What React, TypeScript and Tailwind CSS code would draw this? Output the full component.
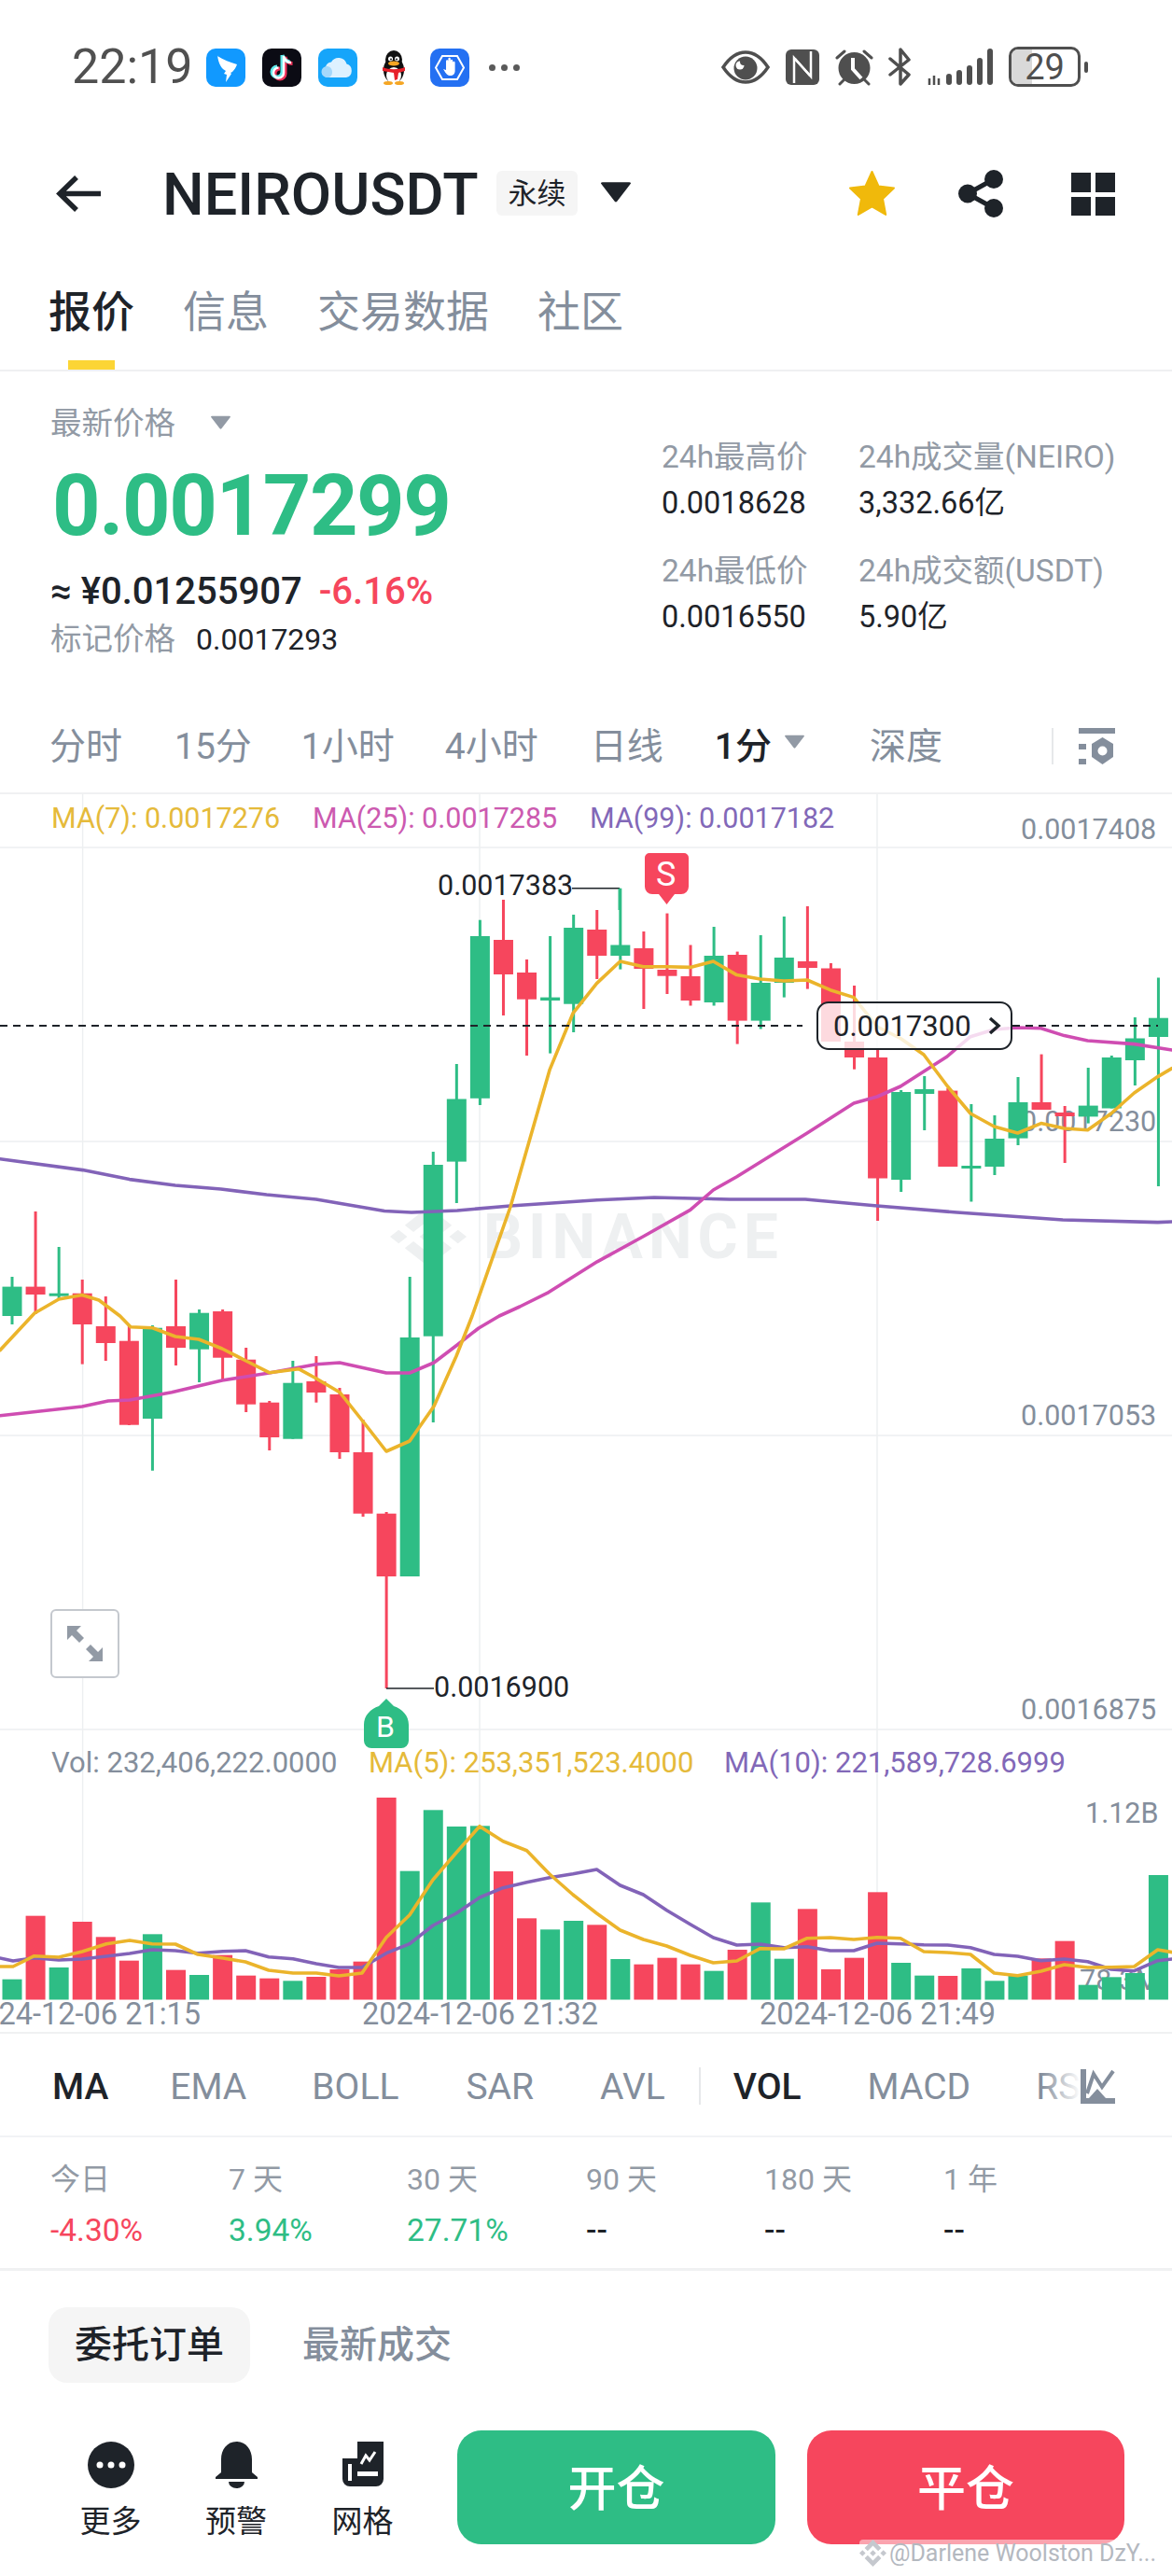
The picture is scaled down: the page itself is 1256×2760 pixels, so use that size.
import React from 'react';

const GREEN = '#2EBD85';
const RED = '#F6465D';
const DARK = '#1E2329';
const cx = (i: number) => 13 + 25.07 * i;

type Candle = [string, number, number, number, number];
const candles: Candle[] = [
  ['g', 1368, 1378.6, 1410, 1419], ['r', 1298, 1378.6, 1387, 1408], ['g', 1336, 1385.7, 1388.6, 1392],
  ['r', 1371, 1385.7, 1419, 1461.6], ['r', 1389, 1421, 1439, 1458], ['r', 1420, 1436.7, 1526.7, 1527],
  ['g', 1420, 1422.7, 1520, 1575.7], ['r', 1371, 1421, 1444, 1463], ['g', 1403, 1406.7, 1445.7, 1481],
  ['r', 1403, 1405, 1454.7, 1478], ['r', 1444, 1456.7, 1504.7, 1513], ['r', 1501, 1502.7, 1540, 1554],
  ['g', 1458, 1481.7, 1541.7, 1541.7], ['r', 1453, 1480, 1492, 1502.7], ['r', 1487, 1494, 1556, 1563],
  ['r', 1521, 1556, 1621.7, 1625], ['r', 1620, 1621.7, 1689, 1809], ['g', 1368, 1433, 1689, 1689],
  ['g', 1234, 1248, 1431.7, 1524], ['g', 1140, 1177.5, 1244.6, 1289], ['g', 985.7, 1003, 1176.8, 1184],
  ['r', 964, 1007, 1044, 1088], ['r', 1028, 1042, 1070.7, 1131], ['g', 1003, 1068.6, 1072, 1128.6],
  ['g', 980, 994, 1075.7, 1106], ['r', 975, 996, 1024, 1049], ['g', 951.8, 1012.5, 1024, 1038.6],
  ['r', 998, 1016, 1038, 1081], ['r', 978.6, 1039, 1045.7, 1065], ['r', 1012.5, 1046, 1072, 1077.5],
  ['g', 993, 1024, 1074, 1077.5], ['r', 1019.6, 1023, 1093.6, 1118.6], ['g', 1002, 1053, 1093.6, 1102.5],
  ['g', 982, 1026, 1053, 1068.6], ['r', 971, 1030, 1037, 1059.6], ['r', 1032, 1037.5, 1116, 1116],
  ['r', 1056, 1116, 1133, 1145.7], ['r', 1125, 1133, 1262.5, 1308], ['g', 1168, 1170, 1264, 1277],
  ['g', 1153, 1167, 1172, 1211], ['r', 1166, 1168.6, 1250, 1250], ['g', 1183, 1249, 1252, 1287.5],
  ['g', 1195, 1220, 1250, 1259], ['g', 1154, 1181, 1219.6, 1227], ['r', 1129.6, 1181, 1189, 1189],
  ['r', 1185, 1192, 1196, 1246], ['g', 1144, 1184.6, 1196.4, 1203.6], ['g', 1131, 1133, 1187.5, 1187.5],
  ['g', 1090, 1112.5, 1136, 1163], ['g', 1047.5, 1090.7, 1111, 1271], ['g', 1060, 1085, 1110, 1200],
];

const vols: [string, number][] = [
  ['g', 782], ['r', 578], ['g', 744], ['r', 597], ['r', 646], ['r', 722], ['g', 637], ['r', 752], ['g', 768], ['r', 704],
  ['r', 770], ['r', 779], ['g', 787], ['r', 774], ['r', 750], ['r', 725], ['r', 198], ['g', 434], ['g', 238], ['g', 291],
  ['g', 289], ['r', 435], ['r', 586], ['g', 622], ['g', 594], ['r', 607], ['g', 717], ['r', 734], ['r', 713], ['r', 734],
  ['g', 755], ['r', 687], ['g', 535], ['g', 716], ['r', 556], ['r', 750], ['r', 713], ['r', 502], ['g', 729], ['g', 770],
  ['r', 771], ['g', 747], ['g', 787], ['g', 770], ['r', 715], ['r', 659], ['g', 800], ['g', 775], ['g', 762], ['g', 447],
];

const ma7 = '0,1446.7 37,1407 63,1392 88,1387.5 106,1393 128.6,1410 140,1421.7 163.5,1422.7 188,1432 213,1435 238,1445 263.6,1458 288.5,1470.7 320,1466.7 339,1477 364,1491.7 389,1523 414,1555 439,1544 465,1506.7 489,1453 506,1410 547,1293 589,1146.4 614,1085.7 639.5,1053.6 664.6,1030 689.4,1035.7 714.5,1035.7 739.7,1036.4 764.4,1030 789.6,1044.6 814.7,1049 840,1051 865,1050 889.8,1060.7 915,1068.6 940,1100 965,1112.5 990,1130 1015.5,1164 1040,1193 1065.4,1207 1090.6,1214 1115.7,1203.6 1140.5,1209 1165.6,1210.7 1190.8,1193 1215.5,1171 1240.7,1153.6 1256,1144.6';
const ma25 = '0,1516.7 88,1507 116,1501 139,1500 184,1491.7 238,1479 288.5,1471 339,1461.7 364,1460 414,1471 439,1471 465,1460 489,1441.7 513,1423 535,1410 557,1400 588,1384.6 640,1351.8 689,1325 739.7,1296.4 764.4,1275 789.6,1260.7 865,1214 915,1182 940,1175 965,1164 1015,1132 1040,1110.7 1065.4,1103 1090.6,1101 1115.7,1101.8 1140.5,1109.6 1165.6,1115 1215.5,1118.6 1256,1125';
const ma99 = '0,1241.8 88.6,1253.6 138.8,1263.6 187.8,1270 236.7,1274 285.7,1280 338.8,1285 412,1297.5 441,1299 490,1297 547,1292 640,1285.7 701,1283 782,1285 863,1285 940,1292 1025.7,1299 1139,1307 1240.7,1309.6 1256,1309';
const v5 = '0,2107 14,2107 36.7,2095.7 63,2097 88,2091 114,2082.7 139,2079 163,2082.7 188,2083 212,2094 239,2098 263,2102 288,2111 314,2114 339,2114 363,2117 388,2114 414,2075.7 439,2051.7 464,2014 489,1985 514,1956.7 539,1972.7 564.5,1982.7 589,2008 614,2030 639.5,2050 664.6,2068 689.4,2078 714.5,2085 739.7,2095 764.4,2103 789.6,2101 814.7,2087.7 840,2088 865,2076.7 889.8,2076 915,2078 940,2075.7 965,2076.7 990,2091 1015.5,2092 1040,2094 1065.4,2114 1090.6,2116.7 1115.7,2112 1140.5,2105 1165.6,2108 1190.8,2107.7 1215.5,2107 1240.7,2089 1256,2091.7';
const v10 = '0,2098 14,2101 36.7,2097.7 63,2100 88,2099 114,2096 139,2093 163,2089 188,2090 212,2092.7 239,2090.7 263,2090 288,2096.7 314,2098.7 339,2104 363,2108 388,2108 414,2092.7 439,2082.7 464,2063 489,2050 514,2033 539,2022.7 564.5,2016.7 589,2011.7 614,2007.7 639.5,2003 664.6,2020 689.4,2030 714.5,2046.7 739.7,2061.7 764.4,2076 789.6,2084 814.7,2083 840,2086.7 865,2085.7 889.8,2090 915,2090 940,2082 965,2082.7 990,2083.7 1015.5,2084 1040,2086.7 1065.4,2094 1090.6,2096 1115.7,2100.7 1140.5,2099 1165.6,2101.7 1190.8,2110 1215.5,2111.7 1240.7,2100.7 1256,2099';

const BN = 'M38.73 53.2l24.59-24.58 24.6 24.6 14.3-14.31L63.32 0 24.42 38.9zM0 63.31l14.3-14.31 14.31 14.31-14.31 14.3zM38.73 73.41l24.59 24.59 24.6-24.6 14.31 14.29-38.9 38.91-38.91-38.88zM98 63.31l14.3-14.3 14.31 14.3-14.31 14.3zM77.83 63.3L63.32 48.78 52.59 59.51l-1.24 1.23-2.54 2.54 14.51 14.5 14.51-14.47z';

function Line({ pts, color, w = 3.6 }: { pts: string; color: string; w?: number }) {
  return <polyline points={pts} fill="none" stroke={color} strokeWidth={w} strokeLinejoin="round" strokeLinecap="round" />;
}

function ChartSvg() {
  return (
    <svg className="absolute left-0 top-0" width={1256} height={1326} viewBox="0 851 1256 1326">
      {candles.map((c, i) => {
        const col = c[0] === 'g' ? GREEN : RED;
        return (
          <g key={i}>
            <rect x={cx(i) - 1.5} y={c[1]} width={3} height={c[4] - c[1]} fill={col} />
            <rect x={cx(i) - 10.5} y={c[2]} width={21} height={Math.max(c[3] - c[2], 3)} fill={col} />
          </g>
        );
      })}
      <Line pts={ma99} color="#8263B8" />
      <Line pts={ma25} color="#CF4DB2" />
      <Line pts={ma7} color="#EBB42B" />
      <line x1={0} y1={1099} x2={860} y2={1099} stroke={DARK} strokeWidth={2} strokeDasharray="8 6" />
      <line x1={1085} y1={1099} x2={1241} y2={1099} stroke={DARK} strokeWidth={2} strokeDasharray="8 6" />
      <polyline points="613,951.8 664,951.8" fill="none" stroke={DARK} strokeWidth={1.5} />
      <line x1={664} y1={951.8} x2={664} y2={975} stroke={GREEN} strokeWidth={3} />
      <polyline points="414,1809 465,1809" fill="none" stroke={DARK} strokeWidth={1.5} />
      {vols.map((v, i) => {
        const top = 1860 + v[1] / 3;
        return <rect key={i} x={cx(i) - 10.5} y={top} width={21} height={2142.5 - top} fill={v[0] === 'g' ? GREEN : RED} />;
      })}
      <Line pts={v10} color="#8263B8" />
      <Line pts={v5} color="#EBB42B" />
      <path d="M697 914h36a5 5 0 0 1 5 5v31a8 8 0 0 1-8 8h-7l-8.500 11-8.500-11h-7a8 8 0 0 1-8-8v-31a5 5 0 0 1 5-5z" fill={RED} />
      <path d="M414 1820l8 8c9 3 16 10 16 20v17a8 8 0 0 1-8 8h-32a8 8 0 0 1-8-8v-17c0-10 7-17 16-20z" fill={GREEN} />
    </svg>
  );
}

function Grid() {
  return (
    <svg className="absolute left-0 top-0" width={1256} height={1326} viewBox="0 851 1256 1326">
      {[88.6, 514, 940].map((x) => (
        <line key={x} x1={x} y1={851} x2={x} y2={2142} stroke="#EDEFF1" strokeWidth={1.5} />
      ))}
      {[908, 1223, 1538, 1853].map((y) => (
        <line key={y} x1={0} y1={y} x2={1256} y2={y} stroke="#EDEFF1" strokeWidth={1.5} />
      ))}
      <svg x={418} y={1293} width={82} height={64} viewBox="0 0 126.61 126.61" preserveAspectRatio="none">
        <path d={BN} fill="#EEF0F1" />
      </svg>
    </svg>
  );
}

function AppIcons() {
  return (
    <div className="flex items-center ml-[13px]">
      <svg width={42} height={41} viewBox="0 0 42 41">
        <rect width={42} height={41} rx={10} fill="#1199FF" />
        <path d="M12 8c6 4 14 7 21 9-1 3-3 6-5 8l-2 1 1 1-6 9 1-8-3-1 2-3c-4-2-8-7-9-17z" fill="#fff" />
      </svg>
      <svg className="ml-[18px]" width={42} height={41} viewBox="0 0 42 41">
        <rect width={42} height={41} rx={10} fill="#0B0B14" />
        <path d="M23 8v18a5.500 5.500 0 1 1-5.500-5.500M23 8c1 4 4 7 8 7" fill="none" stroke="#F0325A" strokeWidth={4} transform="translate(1.500 1)" />
        <path d="M23 8v18a5.500 5.500 0 1 1-5.500-5.500M23 8c1 4 4 7 8 7" fill="none" stroke="#5FE8EA" strokeWidth={4} transform="translate(-1.500 -1)" />
        <path d="M23 8v18a5.500 5.500 0 1 1-5.500-5.500M23 8c1 4 4 7 8 7" fill="none" stroke="#fff" strokeWidth={2.500} />
      </svg>
      <svg className="ml-[18px]" width={42} height={41} viewBox="0 0 42 41">
        <rect width={42} height={41} rx={10} fill="#16A5FA" />
        <path d="M10 31a6 6 0 0 1-2-11.500 7 7 0 0 1 6-5 9 9 0 0 1 16.500 2A7.500 7.500 0 0 1 30 31z" fill="#DDF1FF" />
        <path d="M10 31a6 6 0 0 1-1-12c3 0 6 2 6 6s-2 6-5 6z" fill="#A5D8FB" />
      </svg>
      <svg className="ml-[24px]" width={30} height={37} viewBox="0 0 30 37">
        <ellipse cx={15} cy={21} rx={11} ry={14} fill="#111" />
        <ellipse cx={15} cy={10} rx={9} ry={10} fill="#111" />
        <ellipse cx={15} cy={27} rx={8} ry={9} fill="#fff" />
        <circle cx={11.500} cy={9} r={2.500} fill="#fff" />
        <circle cx={18.500} cy={9} r={2.500} fill="#fff" />
        <circle cx={12} cy={9.500} r={1} fill="#111" />
        <circle cx={18} cy={9.500} r={1} fill="#111" />
        <ellipse cx={15} cy={14} rx={6} ry={2.500} fill="#F5A623" />
        <path d="M3 18c7 3 17 3 24 0v4l-7 2-1 7-3 1-1-8-12-2z" fill="#E7202A" />
        <ellipse cx={9} cy={35} rx={5} ry={2} fill="#F5A623" />
        <ellipse cx={21} cy={35} rx={5} ry={2} fill="#F5A623" />
      </svg>
      <svg className="ml-[24px]" width={42} height={41} viewBox="0 0 42 41">
        <rect width={42} height={41} rx={10} fill="#2470F2" />
        <path d="M13 8h16l7 12.500-7 12.500H13L6 20.500z" fill="none" stroke="#fff" strokeWidth={2} />
        <path d="M14 22l3 1V13.500a1.200 1.200 0 0 1 2.400 0V11a1.200 1.200 0 0 1 2.400 0v2a1.200 1.200 0 0 1 2.400 0v2a1.200 1.200 0 0 1 2.400 0v9c0 3-2 5-5 5-3 0-4-1-7.600-7z" fill="#fff" />
      </svg>
      <div className="flex gap-[6px] ml-[21px]">
        <div className="w-[7px] h-[7px] rounded-full bg-[#5a5a5a]" />
        <div className="w-[7px] h-[7px] rounded-full bg-[#5a5a5a]" />
        <div className="w-[7px] h-[7px] rounded-full bg-[#5a5a5a]" />
      </div>
    </div>
  );
}

function StatusRight() {
  const c = '#4F4F4F';
  return (
    <div className="flex items-center absolute left-[773px] top-[50px]">
      <svg width={52} height={38} viewBox="0 0 52 38">
        <path d="M2 19C10 7 18 3 26 3s16 4 24 16c-8 12-16 16-24 16S10 31 2 19z" fill="none" stroke={c} strokeWidth={3.500} />
        <circle cx={26} cy={20} r={12.500} fill={c} />
        <circle cx={20} cy={17} r={4.500} fill="#fff" />
        <circle cx={24} cy={13} r={4} fill={c} />
      </svg>
      <svg className="ml-[17px]" width={36} height={38} viewBox="0 0 36 38">
        <rect width={36} height={38} rx={6} fill={c} />
        <path d="M9 36V9l17 19" fill="none" stroke="#fff" strokeWidth={2.500} />
        <path d="M27 2v27L10 10" fill="none" stroke="#fff" strokeWidth={2.500} />
      </svg>
      <svg className="ml-[17px]" width={41} height={40} viewBox="0 0 41 40">
        <circle cx={20.500} cy={21} r={17} fill={c} />
        <path d="M19 10v12l9 10" fill="none" stroke="#fff" strokeWidth={4} />
        <path d="M2 10l8-7M39 10l-8-7M5 38l4-4M36 38l-4-4" stroke={c} strokeWidth={3} strokeLinecap="round" />
      </svg>
      <svg className="ml-[16px]" width={25} height={41} viewBox="0 0 25 41">
        <path d="M2 29L22 13 13 2v37l9-10L2 12" fill="none" stroke={c} strokeWidth={3.500} strokeLinejoin="round" strokeLinecap="round" />
      </svg>
      <svg className="ml-[16px]" width={71} height={41} viewBox="0 0 71 41">
        <path d="M3 33v7M8 30v10M13 33v7" stroke={c} strokeWidth={2.500} />
        <rect x={21} y={28} width={6} height={12} rx={3} fill={c} />
        <rect x={32} y={24} width={6} height={16} rx={3} fill={c} />
        <rect x={43} y={19} width={6} height={21} rx={3} fill={c} />
        <rect x={54} y={11} width={6} height={29} rx={3} fill={c} />
        <rect x={65} y={1} width={6} height={39} rx={3} fill={c} />
      </svg>
      <div className="relative ml-[17px] w-[77px] h-[43px] rounded-[10px] border-[3px] border-[#4F4F4F] overflow-hidden flex items-center justify-center">
        <div className="absolute left-0 top-0 bottom-0 w-[22px] bg-[#D9D9D9]" />
        <span className="relative text-[38px] leading-none text-[#4F4F4F]">29</span>
      </div>
      <div className="ml-[4px] w-[4px] h-[12px] rounded-full bg-[#4F4F4F]" />
    </div>
  );
}

const Tri = ({ w, h, color }: { w: number; h: number; color: string }) => (
  <svg width={w} height={h} viewBox="0 0 10 10" preserveAspectRatio="none">
    <path d="M0.500 0.500h9a.5.5 0 0 1 .4.8L5.400 9.500a.5.5 0 0 1-.8 0L.1 1.300a.5.5 0 0 1 .4-.8z" fill={color} />
  </svg>
);

function Abs({ x, y, h, cls, children }: { x: number; y: number; h: number; cls: string; children: React.ReactNode }) {
  return (
    <div className={`absolute whitespace-nowrap ${cls}`} style={{ left: x, top: y - 851, lineHeight: `${h}px` }}>
      {children}
    </div>
  );
}

export default function App() {
  return (
    <div className="relative w-[1256px] h-[2760px] bg-white overflow-hidden flex flex-col font-[Roboto,'Noto_Sans_CJK_SC',sans-serif] text-[#1E2329]">
      {/* status bar */}
      <div className="h-[144px] shrink-0 flex items-center pl-[77px]">
        <span className="text-[52px] leading-none text-[#505050] w-[131px] whitespace-nowrap">22:19</span>
        <AppIcons />
      </div>
      <StatusRight />

      {/* header */}
      <div className="h-[126px] shrink-0 flex items-center relative">
        <svg className="ml-[60px]" width={50} height={39} viewBox="0 0 50 39">
          <path d="M48 19.500H6M22 2L4 19.500 22 37" fill="none" stroke={DARK} strokeWidth={5.500} />
        </svg>
        <span className="ml-[64px] mt-[2px] text-[63px] leading-none font-medium w-[345px] whitespace-nowrap">NEIROUSDT</span>
        <span className="ml-[13px] w-[87px] h-[48px] rounded-[6px] bg-[#F5F5F5] flex items-center justify-center text-[31px] leading-none">永续</span>
        <div className="ml-[25px] mt-[-3px] flex">
          <Tri w={32} h={23} color={DARK} />
        </div>
        <svg className="absolute left-[909px] top-[38px]" width={51} height={51} viewBox="0 0 51 51">
          <path d="M25.500 2l7 15.500 16.500 2-12 11.500 3.200 17-14.700-8.500-14.700 8.500 3.200-17L2 19.500l16.500-2z" fill="#F0B90B" stroke="#F0B90B" strokeWidth={2} strokeLinejoin="round" />
        </svg>
        <svg className="absolute left-[1027px] top-[38px]" width={48} height={51} viewBox="0 0 48 51">
          <path d="M10 25.500L38 10M10 25.500L38 41" stroke={DARK} strokeWidth={5} />
          <circle cx={10} cy={25.500} r={10} fill={DARK} />
          <circle cx={38} cy={10} r={10} fill={DARK} />
          <circle cx={38} cy={41} r={10} fill={DARK} />
        </svg>
        <div className="absolute left-[1148px] top-[41px] w-[47px] h-[46px] grid grid-cols-2 gap-[5px]">
          <div className="bg-[#1E2329]" /><div className="bg-[#1E2329]" /><div className="bg-[#1E2329]" /><div className="bg-[#1E2329]" />
        </div>
      </div>

      {/* tabs */}
      <div className="h-[128px] shrink-0 border-b-2 border-[#EFF0F2] flex pl-[52px] gap-[52px]">
        <div className="flex flex-col items-center">
          <span className="mt-[41px] text-[46px] leading-[46px] font-medium">报价</span>
          <div className="mt-[29px] w-[50px] h-[10px] bg-[#FCD535]" />
        </div>
        <span className="mt-[41px] text-[46px] leading-[46px] text-[#848E9C]">信息</span>
        <span className="mt-[41px] text-[46px] leading-[46px] text-[#848E9C]">交易数据</span>
        <span className="mt-[41px] text-[46px] leading-[46px] text-[#848E9C]">社区</span>
      </div>

      {/* price block */}
      <div className="h-[354px] shrink-0 flex">
        <div className="w-[709px] shrink-0 pl-[54px] flex flex-col">
          <div className="mt-[38px] h-[36px] flex items-center text-[33.500px] leading-[36px] text-[#929AA5]">
            最新价格
            <div className="ml-[38px] mt-[-4px] flex"><Tri w={21} h={15} color="#929AA5" /></div>
          </div>
          <div className="mt-[31px] ml-[2px] h-[80px] text-[90px] leading-[80px] font-bold text-[#2EBD85] tracking-[-1.400px]">0.0017299</div>
          <div className="mt-[31px] h-[40px] flex items-baseline text-[40px] leading-[40px] font-medium">
            <span>≈ ¥0.01255907</span>
            <span className="ml-[18px] text-[#F6465D]">-6.16%</span>
          </div>
          <div className="mt-[13px] h-[36px] flex items-center text-[33.500px] leading-[36px] text-[#929AA5]">
            标记价格
            <span className="ml-[22px] text-[32px] text-[#1E2329]">0.0017293</span>
          </div>
        </div>
        <div className="grid grid-cols-[211px_1fr] content-start pt-[75px]">
          {[
            ['24h最高价', '0.0018628', '24h成交量(NEIRO)', '3,332.66亿'],
            ['24h最低价', '0.0016550', '24h成交额(USDT)', '5.90亿'],
          ].map((r, i) => (
            <React.Fragment key={i}>
              <div className={i ? 'mt-[39px]' : ''}>
                <div className="text-[33.500px] leading-[34px] text-[#929AA5] whitespace-nowrap">{r[0]}</div>
                <div className="mt-[15px] text-[32.500px] leading-[34px]">{r[1]}</div>
              </div>
              <div className={i ? 'mt-[39px]' : ''}>
                <div className="text-[33.500px] leading-[34px] text-[#929AA5] whitespace-nowrap">{r[2]}</div>
                <div className="mt-[15px] text-[32.500px] leading-[34px]">{r[3]}</div>
              </div>
            </React.Fragment>
          ))}
        </div>
      </div>

      {/* intervals */}
      <div className="h-[97px] shrink-0 relative flex items-center pl-[53px] text-[39px] leading-none text-[#848E9C]">
        <span>分时</span>
        <span className="ml-[56px]">15分</span>
        <span className="ml-[53px]">1小时</span>
        <span className="ml-[54px]">4小时</span>
        <span className="ml-[56px]">日线</span>
        <span className="ml-[55px] flex items-center text-[#1E2329] font-medium">
          1分
          <span className="ml-[14px] mt-[-12px] flex"><Tri w={21} h={15} color="#929AA5" /></span>
        </span>
        <span className="ml-[70px]">深度</span>
        <div className="absolute left-[1127px] top-[28px] w-[1.500px] h-[39px] bg-[#E6E8EA]" />
        <svg className="absolute left-[1156px] top-[28px]" width={39} height={39} viewBox="0 0 39 39">
          <rect width={39} height={6} fill="#848E9C" />
          <rect y={17} width={8} height={6} fill="#848E9C" />
          <rect y={33} width={8} height={6} fill="#848E9C" />
          <path d="M25.500 10l11.500 7v14l-11.500 8L14 31V17z" fill="#848E9C" />
          <circle cx={25.500} cy={24.500} r={5} fill="#fff" />
        </svg>
      </div>

      {/* chart */}
      <div className="relative h-[1326px] shrink-0 border-t-2 border-[#F0F1F2] box-content overflow-hidden text-[30.500px]">
        <Grid />
        <Abs x={518} y={1294} h={64} cls="text-[66px] font-bold text-[#EEF0F1] tracking-[6px]">BINANCE</Abs>
        <Abs x={1094} y={871} h={36} cls="text-[#848E9C]">0.0017408</Abs>
        <Abs x={1094} y={1184} h={36} cls="text-[#848E9C]">0.0017230</Abs>
        <Abs x={1094} y={1499} h={36} cls="text-[#848E9C]">0.0017053</Abs>
        <Abs x={1094} y={1814} h={36} cls="text-[#848E9C]">0.0016875</Abs>
        <Abs x={1163} y={1925} h={36} cls="text-[#848E9C]">1.12B</Abs>
        <Abs x={1157} y={2104} h={36} cls="text-[#848E9C]">78.3M</Abs>
        <ChartSvg />
        <Abs x={55} y={859} h={36} cls="text-[#E5BA3A]">MA(7): 0.0017276</Abs>
        <Abs x={335} y={859} h={36} cls="text-[#CC5AB0]">MA(25): 0.0017285</Abs>
        <Abs x={632} y={859} h={36} cls="text-[#8268B8]">MA(99): 0.0017182</Abs>
        <Abs x={469} y={931} h={36} cls="text-[#1E2329]">0.0017383</Abs>
        <Abs x={465} y={1790} h={36} cls="text-[#1E2329]">0.0016900</Abs>
        <Abs x={703} y={917} h={40} cls="text-[36px] text-white">S</Abs>
        <Abs x={403} y={1830} h={40} cls="text-[32px] text-white">B</Abs>
        <Abs x={55} y={1871} h={36} cls="text-[31px] text-[#848E9C]">Vol: 232,406,222.0000</Abs>
        <Abs x={395} y={1871} h={36} cls="text-[31px] text-[#E5BA3A]">MA(5): 253,351,523.4000</Abs>
        <Abs x={776} y={1871} h={36} cls="text-[31px] text-[#8268B8]">MA(10): 221,589,728.6999</Abs>
        <Abs x={-38} y={2140} h={36} cls="text-[32.500px] text-[#848E9C]">2024-12-06 21:15</Abs>
        <Abs x={388} y={2140} h={36} cls="text-[32.500px] text-[#848E9C]">2024-12-06 21:32</Abs>
        <Abs x={814} y={2140} h={36} cls="text-[32.500px] text-[#848E9C]">2024-12-06 21:49</Abs>

        <div className="absolute left-[875px] top-[222px] w-[210px] h-[52px] rounded-[13px] border-2 border-[#1E2329] bg-white/80 flex items-center pl-[16px] text-[31px] leading-none">
          0.0017300
          <svg className="ml-[18px]" width={14} height={20} viewBox="0 0 14 20">
            <path d="M2 2l9 8-9 8" fill="none" stroke={DARK} strokeWidth={3.500} />
          </svg>
        </div>
        <div className="absolute left-[54px] top-[873px] w-[74px] h-[74px] rounded-[6px] border-2 border-[#C4C8CE] bg-white flex items-center justify-center">
          <svg width={44} height={44} viewBox="0 0 44 44">
            <path d="M3 3h15l-5 5 8 8-5 5-8-8-5 5z" fill="#929AA5" />
            <path d="M41 41H26l5-5-8-8 5-5 8 8 5-5z" fill="#929AA5" />
          </svg>
        </div>
      </div>

      <div className="h-[2px] shrink-0 bg-[#F0F1F2]" />

      {/* indicators */}
      <div className="relative h-[111px] shrink-0 border-b-2 border-[#F2F3F5] text-[39px] leading-none text-[#848E9C]">
        <div className="flex items-center h-full pl-[56px] pt-[6px] gap-[70px] whitespace-nowrap">
          <span className="text-[#1E2329] font-medium">MA</span>
          <span className="ml-[-4px]">EMA</span>
          <span>BOLL</span>
          <span className="ml-[2px]">SAR</span>
          <span className="ml-[1px]">AVL</span>
          <span className="ml-[3px] text-[#1E2329] font-medium">VOL</span>
          <span className="ml-[1px]">MACD</span>
          <span>RSI</span>
        </div>
        <div className="absolute left-[749px] top-[36px] w-[1.500px] h-[40px] bg-[#E6E8EA]" />
        <div className="absolute left-[1116px] top-0 bottom-0 w-[42px] bg-linear-to-r from-transparent to-white" />
        <div className="absolute left-[1158px] top-0 bottom-0 w-[98px] bg-white" />
        <svg className="absolute left-[1158px] top-[38px]" width={37} height={37} viewBox="0 0 37 37">
          <path d="M3 0v34h34" fill="none" stroke="#848E9C" strokeWidth={6} />
          <path d="M7 26L14 5l9 14 12-17" fill="none" stroke="#848E9C" strokeWidth={4} />
          <path d="M9 31l9-10 9 10z" fill="#848E9C" />
        </svg>
      </div>

      {/* periods */}
      <div className="h-[143px] shrink-0 border-b-[3px] border-[#F0F1F2] grid grid-cols-[191px_191px_192px_191px_192px_1fr] pl-[54px] pt-[28px]">
        {[
          ['今日', '-4.30%', 'text-[#F6465D]'],
          ['7 天', '3.94%', 'text-[#2EBD85]'],
          ['30 天', '27.71%', 'text-[#2EBD85]'],
          ['90 天', '--', 'text-[#1E2329] font-medium'],
          ['180 天', '--', 'text-[#1E2329] font-medium'],
          ['1 年', '--', 'text-[#1E2329] font-medium'],
        ].map((c) => (
          <div key={c[0]}>
            <div className="text-[32px] leading-[34px] text-[#929AA5]">{c[0]}</div>
            <div className={`mt-[21px] text-[33.500px] leading-[34px] ${c[2]}`}>{c[1]}</div>
          </div>
        ))}
      </div>

      {/* order tabs */}
      <div className="shrink-0 flex items-center pl-[52px] mt-[39px]">
        <div className="w-[216px] h-[81px] rounded-[20px] bg-[#F5F5F5] flex items-center justify-center text-[40px] leading-none font-medium">委托订单</div>
        <span className="ml-[56px] text-[40px] leading-none text-[#848E9C] font-medium">最新成交</span>
      </div>

      {/* bottom bar */}
      <div className="shrink-0 flex mt-[51px] relative">
        <div className="w-[490px] shrink-0 pl-[86px] flex items-start">
          <div className="w-[65px] flex flex-col items-center pt-[12px]">
            <svg width={50} height={50} viewBox="0 0 50 50">
              <circle cx={25} cy={25} r={25} fill={DARK} />
              <circle cx={13} cy={25} r={3.500} fill="#fff" />
              <circle cx={25} cy={25} r={3.500} fill="#fff" />
              <circle cx={37} cy={25} r={3.500} fill="#fff" />
            </svg>
            <span className="mt-[19px] text-[33px] leading-[34px] whitespace-nowrap">更多</span>
          </div>
          <div className="ml-[69px] w-[66px] flex flex-col items-center pt-[12px]">
            <svg width={45} height={50} viewBox="0 0 45 50">
              <path d="M22.500 0C33 0 39 9 39 19v14l6 5v2H0v-2l6-5V19C6 9 12 0 22.500 0z" fill={DARK} />
              <path d="M14 43h17a8.500 7 0 0 1-17 0z" fill={DARK} />
            </svg>
            <span className="mt-[19px] text-[33px] leading-[34px] whitespace-nowrap">预警</span>
          </div>
          <div className="ml-[70px] w-[65px] flex flex-col items-center pt-[12px]">
            <svg width={44} height={50} viewBox="0 0 44 50">
              <path d="M16 0h28v40a8 8 0 0 1-8 8H8a8 8 0 0 1-8-8V18h16z" fill={DARK} />
              <path d="M20 24l5-9 4 5 6-9" fill="none" stroke="#fff" strokeWidth={3} />
              <rect x={6} y={24} width={4} height={18} fill="#fff" />
              <rect x={16} y={32} width={22} height={5} fill="#fff" />
            </svg>
            <span className="mt-[19px] text-[33px] leading-[34px] whitespace-nowrap">网格</span>
          </div>
        </div>
        <div className="w-[341px] h-[122px] pt-[6px] rounded-[26px] bg-[#2EBD85] flex items-center justify-center text-[52px] leading-none font-medium text-white">开仓</div>
        <div className="ml-[34px] w-[340px] h-[122px] pt-[6px] rounded-[26px] bg-[#F6465D] flex items-center justify-center text-[52px] leading-none font-medium text-white">平仓</div>
        <div className="absolute left-[921px] top-[117px] flex items-center bg-white/50 rounded-[4px]">
          <svg width={29} height={29} viewBox="0 0 126.61 126.61"><path d={BN} fill="#C5C8CE" /></svg>
          <span className="ml-[3px] text-[25px] leading-[28px] text-[#B4B8BF] whitespace-nowrap">@Darlene Woolston DzY...</span>
        </div>
      </div>
    </div>
  );
}
